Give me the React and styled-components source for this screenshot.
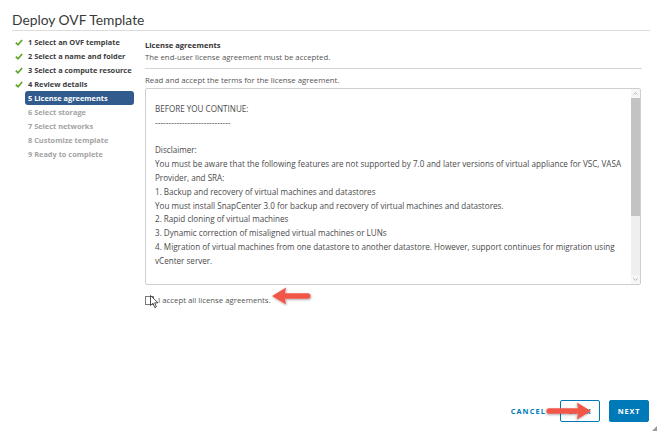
import React from "react";
import styled, { createGlobalStyle } from "styled-components";

const GlobalStyle = createGlobalStyle`
  html, body {
    margin: 0;
    padding: 0;
    background: #ffffff;
  }
  body {
    font-family: "Open Sans", "Liberation Sans", sans-serif;
    color: #565656;
  }
`;

const Page = styled.div`
  position: relative;
  width: 660px;
  height: 434px;
  box-sizing: border-box;
  padding: 10px 10px 0 12px;
  display: flex;
  flex-direction: column;
  overflow: hidden;
`;

const Title = styled.h1`
  margin: 0;
  font-family: "Lato", "Open Sans", sans-serif;
  font-size: 13.8px;
  font-weight: 400;
  color: #3a3a3a;
  line-height: 19px;
  padding-bottom: 1px;
  border-bottom: 1px solid #dcdcdc;
`;

const Body = styled.div`
  display: grid;
  grid-template-columns: 122px 1fr;
  column-gap: 11px;
  flex: 1;
  padding-top: 4px;
`;

const Nav = styled.ul`
  list-style: none;
  margin: 0;
  padding: 0;
`;

const NavItem = styled.li`
  display: flex;
  align-items: center;
  height: 14px;
  font-size: 7.4px;
  font-weight: 700;
  color: ${(p) => (p.$state === "todo" ? "#a3a3a3" : p.$state === "active" ? "#ffffff" : "#3d3d3d")};
`;

const CheckSlot = styled.span`
  width: 13px;
  display: flex;
  justify-content: flex-start;
  padding-left: 3px;
  box-sizing: border-box;
`;

const NavLabel = styled.span`
  flex: 1;
  height: 14px;
  line-height: 14px;
  padding-left: 3px;
  border-radius: 3px;
  background: ${(p) => (p.$active ? "#315b8c" : "transparent")};
`;

const Content = styled.div`
  display: flex;
  flex-direction: column;
  padding-top: 4px;
  padding-right: 8px;
`;

const SectionHead = styled.div`
  font-size: 7.6px;
  font-weight: 700;
  color: #333;
  line-height: 12px;
`;

const SectionSub = styled.div`
  font-size: 7.8px;
  line-height: 12px;
  color: #565656;
  padding-bottom: 5px;
  border-bottom: 1px solid #d6d6d6;
`;

const Lead = styled.div`
  font-size: 7.8px;
  line-height: 12px;
  color: #565656;
  margin-top: 5px;
`;

const LicenseBox = styled.div`
  margin-top: 2px;
  height: 197px;
  box-sizing: border-box;
  border: 1px solid #cfcfcf;
  border-radius: 2px;
  display: flex;
  margin-right: 1px;
`;

const LicenseText = styled.div`
  flex: 1;
  overflow: hidden;
  padding: 13px 10px 0 9px;
  font-size: 8.1px;
  line-height: 13.8px;
  color: #4a4a4a;
`;

const Line = styled.div`
  white-space: nowrap;
  min-height: 13.8px;
  letter-spacing: ${(p) => (p.$dashes ? "0.1px" : "0")};
`;

const ScrollTrack = styled.div`
  width: 9px;
  background: #efefef;
  display: flex;
  flex-direction: column;
  align-items: center;
`;

const ScrollArrow = styled.div`
  height: 9px;
  width: 9px;
  display: flex;
  align-items: center;
  justify-content: center;
  background: #f6f6f6;
`;

const ScrollThumb = styled.div`
  width: 9px;
  height: 118px;
  background: #c3c3c3;
`;

const ScrollRest = styled.div`
  flex: 1;
`;

const AcceptRow = styled.label`
  display: flex;
  align-items: center;
  gap: 4px;
  margin-top: 10px;
  font-size: 7.8px;
  color: #565656;
  position: relative;
`;

const Box = styled.span`
  width: 7px;
  height: 7px;
  border: 1px solid #7a7a7a;
  background: #fff;
  display: inline-block;
`;

const Footer = styled.div`
  display: flex;
  justify-content: flex-end;
  align-items: center;
  gap: 9px;
  padding: 0 1px 12px 0;
  position: relative;
`;

const Button = styled.button`
  height: 22px;
  min-width: ${(p) => (p.$variant === "link" ? "0" : "40px")};
  padding: ${(p) => (p.$variant === "link" ? "0 4px" : "0 6px")};
  font-family: "Open Sans", "Liberation Sans", sans-serif;
  font-size: 7.3px;
  font-weight: 700;
  letter-spacing: ${(p) => (p.$variant === "link" ? "1.15px" : "0.9px")};
  border-radius: 2px;
  cursor: pointer;
  border: 1px solid ${(p) => (p.$variant === "link" ? "transparent" : "#0079b8")};
  background: ${(p) => (p.$variant === "primary" ? "#0079b8" : "transparent")};
  color: ${(p) => (p.$variant === "primary" ? "#ffffff" : "#0079b8")};
`;

const Annotation = styled.svg`
  position: absolute;
  overflow: visible;
  pointer-events: none;
`;

const Grip = styled.svg`
  position: absolute;
  right: 3px;
  bottom: 3px;
`;

const Check = () => (
  <svg width="8" height="7" viewBox="0 0 8 7">
    <path d="M0.8 3.6 L3 5.8 L7.2 1" fill="none" stroke="#5ea422" strokeWidth="1.6" />
  </svg>
);

const Chevron = ({ up }) => (
  <svg width="5" height="3" viewBox="0 0 5 3">
    <path d={up ? "M0.5 2.6 L2.5 0.6 L4.5 2.6" : "M0.5 0.4 L2.5 2.4 L4.5 0.4"} fill="none" stroke="#a8a8a8" strokeWidth="0.8" />
  </svg>
);

const RedArrow = ({ length, style, flip }) => (
  <Annotation width={length} height="20" viewBox={`0 0 ${length} 20`} style={style}>
    <defs>
      <filter id={`sh${flip ? "r" : "l"}`} x="-20%" y="-40%" width="140%" height="180%">
        <feDropShadow dx="0.6" dy="1" stdDeviation="0.8" floodColor="#000" floodOpacity="0.35" />
      </filter>
    </defs>
    <g transform={flip ? `translate(${length},0) scale(-1,1)` : undefined} filter={`url(#sh${flip ? "r" : "l"})`}>
      <path
        d={`M1 10 L15 1.5 L14 7.2 L${length - 3} 7.2 Q${length - 0.5} 7.2 ${length - 0.5} 10 Q${length - 0.5} 12.8 ${length - 3} 12.8 L14 12.8 L15 18.5 Z`}
        fill="#f2574a"
      />
    </g>
  </Annotation>
);

const Cursor = () => (
  <Annotation width="9" height="14" viewBox="0 0 9 14" style={{ left: 5, top: 0 }}>
    <path d="M0.5 0.5 L0.5 10.5 L3 8.3 L4.8 12.6 L6.4 11.9 L4.7 7.8 L8 7.8 Z" fill="#fff" stroke="#222" strokeWidth="0.8" strokeLinejoin="round" />
  </Annotation>
);

const steps = [
  { label: "1 Select an OVF template", state: "done" },
  { label: "2 Select a name and folder", state: "done" },
  { label: "3 Select a compute resource", state: "done" },
  { label: "4 Review details", state: "done" },
  { label: "5 License agreements", state: "active" },
  { label: "6 Select storage", state: "todo" },
  { label: "7 Select networks", state: "todo" },
  { label: "8 Customize template", state: "todo" },
  { label: "9 Ready to complete", state: "todo" },
];

const license = [
  "BEFORE YOU CONTINUE:",
  "----------------------------",
  "",
  "Disclaimer:",
  "You must be aware that the following features are not supported by 7.0 and later versions of virtual appliance for VSC, VASA",
  "Provider, and SRA:",
  "1. Backup and recovery of virtual machines and datastores",
  "You must install SnapCenter 3.0 for backup and recovery of virtual machines and datastores.",
  "2. Rapid cloning of virtual machines",
  "3. Dynamic correction of misaligned virtual machines or LUNs",
  "4. Migration of virtual machines from one datastore to another datastore. However, support continues for migration using",
  "vCenter server.",
];

export default function App() {
  return (
    <>
      <GlobalStyle />
      <Page>
        <Title>Deploy OVF Template</Title>
        <Body>
          <Nav>
            {steps.map((s) => (
              <NavItem key={s.label} $state={s.state}>
                <CheckSlot>{s.state === "done" && <Check />}</CheckSlot>
                <NavLabel $active={s.state === "active"}>{s.label}</NavLabel>
              </NavItem>
            ))}
          </Nav>
          <Content>
            <SectionHead>License agreements</SectionHead>
            <SectionSub>The end-user license agreement must be accepted.</SectionSub>
            <Lead>Read and accept the terms for the license agreement.</Lead>
            <LicenseBox>
              <LicenseText>
                {license.map((l, i) => (
                  <Line key={i} $dashes={l.startsWith("---")}>
                    {l}
                  </Line>
                ))}
              </LicenseText>
              <ScrollTrack>
                <ScrollArrow>
                  <Chevron up />
                </ScrollArrow>
                <ScrollThumb />
                <ScrollRest />
                <ScrollArrow>
                  <Chevron />
                </ScrollArrow>
              </ScrollTrack>
            </LicenseBox>
            <AcceptRow>
              <Box />
              I accept all license agreements.
              <Cursor />
              <RedArrow length={40} style={{ left: 126, top: -9 }} />
            </AcceptRow>
          </Content>
        </Body>
        <Footer>
          <Button $variant="link">CANCEL</Button>
          <Button $variant="outline">BACK</Button>
          <Button $variant="primary">NEXT</Button>
          <RedArrow length={46} flip style={{ right: 58, top: 1 }} />
        </Footer>
        <Grip width="5" height="5" viewBox="0 0 5 5">
          <path d="M5 0 L5 5 L0 5 Z" fill="#9a9a9a" />
        </Grip>
      </Page>
    </>
  );
}
